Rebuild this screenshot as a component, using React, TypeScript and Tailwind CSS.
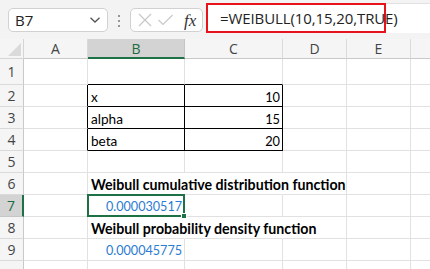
import React from "react";

const cols = [
  { name: "A", w: 64 },
  { name: "B", w: 97 },
  { name: "C", w: 98 },
  { name: "D", w: 64 },
  { name: "E", w: 64 },
  { name: "", w: 40 },
];

type CellDef = {
  text?: string;
  align?: "left" | "right";
  bold?: boolean;
  blue?: boolean;
  overflow?: boolean;
};

const rows: { h: number; label: string; cells: Record<number, CellDef> }[] = [
  { h: 26, label: "1", cells: {} },
  { h: 22, label: "2", cells: { 1: { text: "x" }, 2: { text: "10", align: "right" } } },
  { h: 22, label: "3", cells: { 1: { text: "alpha" }, 2: { text: "15", align: "right" } } },
  { h: 22, label: "4", cells: { 1: { text: "beta" }, 2: { text: "20", align: "right" } } },
  { h: 22, label: "5", cells: {} },
  { h: 22, label: "6", cells: { 1: { text: "Weibull cumulative distribution function", bold: true, overflow: true } } },
  { h: 22, label: "7", cells: { 1: { text: "0.000030517", align: "right", blue: true } } },
  { h: 22, label: "8", cells: { 1: { text: "Weibull probability density function", bold: true, overflow: true } } },
  { h: 22, label: "9", cells: { 1: { text: "0.000045775", align: "right", blue: true } } },
  { h: 22, label: "", cells: {} },
];

const uiFont = { fontFamily: "'Open Sans', 'Noto Sans', sans-serif" };
const cellFont = { fontFamily: "Lato, 'Liberation Sans', sans-serif" };

function cellBorder(r: number, c: number) {
  let right = "border-r-[#e1e1e1]";
  let bottom = "border-b-[#e1e1e1]";
  const inTable = r >= 2 && r <= 4 && (c === 1 || c === 2);
  if (inTable) {
    right = "border-r-black";
    bottom = "border-b-black";
  }
  if (r >= 2 && r <= 4 && c === 0) right = "border-r-black";
  if (r === 1 && (c === 1 || c === 2)) bottom = "border-b-black";
  return `${right} ${bottom}`;
}

function textClass(cell: CellDef) {
  if (cell.bold) return "font-bold text-black text-[14.2px]";
  if (cell.blue) return "text-[#2a7bd1] text-[12.6px]";
  if (cell.align === "right") return "text-black text-[12.8px]";
  return "text-black text-[13.6px]";
}

export default function App() {
  return (
    <div className="w-[430px] h-[269px] overflow-hidden bg-white relative">
      {/* Toolbar */}
      <div className="h-[39px] bg-[#f3f3f3] flex items-start">
        <div className="shrink-0 ml-[8px] mt-[8px] w-[100px] h-[24px] bg-white border border-[#d1d1d1] rounded-[5px] flex items-center justify-between pl-[6px] pr-[6px]">
          <span className="text-[15px] text-[#222]" style={uiFont}>B7</span>
          <svg width="12" height="8" viewBox="0 0 12 8">
            <path d="M1.5 1.8 L6 6 L10.5 1.8" fill="none" stroke="#555" strokeWidth="1.3" />
          </svg>
        </div>
        <div className="shrink-0 w-[22px] h-[39px] flex flex-col items-center pt-[15px] gap-[3px]">
          <div className="w-[2px] h-[2px] bg-[#777] rounded-full" />
          <div className="w-[2px] h-[2px] bg-[#777] rounded-full" />
          <div className="w-[2px] h-[2px] bg-[#777] rounded-full" />
        </div>
        <div className="shrink-0 mt-[8px] w-[73px] h-[24px] bg-white border border-[#d1d1d1] rounded-[5px] flex items-center pl-[6px]">
          <svg width="16" height="16" viewBox="0 0 16 16">
            <path d="M2 2 L14 14 M14 2 L2 14" stroke="#c8c8c8" strokeWidth="1.2" fill="none" />
          </svg>
          <svg width="17" height="16" viewBox="0 0 17 16" className="ml-[4px]">
            <path d="M1.5 8 L6 12.5 L15.5 3" stroke="#c8c8c8" strokeWidth="1.2" fill="none" />
          </svg>
          <span className="ml-[10px] text-[17px] italic text-[#333] leading-none" style={{ fontFamily: "'Liberation Serif', serif" }}>
            fx
          </span>
        </div>
        <div className="ml-[3px] mt-[3px] flex-1 h-[30px] bg-white border-t border-t-[#e1e1e1]">
          <div className="w-[180px] h-[30px] -mt-[1px] border-2 border-[#e8121a] flex items-center pl-[12px]">
            <span className="text-[15px] text-[#222] tracking-[-0.1px]" style={uiFont}>
              =WEIBULL(10,15,20,TRUE)
            </span>
          </div>
        </div>
      </div>

      {/* Column header row */}
      <div className="flex h-[20px]">
        <div className="shrink-0 w-[24px] h-[20px] bg-[#f5f5f5] border-r border-b border-[#d5d5d5] flex items-end justify-end pr-[2px] pb-[2px]">
          <svg width="13" height="13" viewBox="0 0 13 13">
            <path d="M13 0 L13 13 L0 13 Z" fill="#dadada" />
          </svg>
        </div>
        {cols.map((c, i) => (
          <div
            key={i}
            className={`shrink-0 h-[20px] flex items-center justify-center text-[14px] border-r ${
              c.name === "B"
                ? "bg-[#d3d3d3] border-r-[#c6c6c6] border-b-2 border-b-[#1e7145] text-[#1e6b40]"
                : "bg-[#f5f5f5] border-r-[#dadada] border-b border-b-[#c9c9c9] text-[#444]"
            }`}
            style={{ width: c.w, ...uiFont }}
          >
            {c.name}
          </div>
        ))}
      </div>

      {/* Rows */}
      {rows.map((row, ri) => {
        const r = ri + 1;
        const sel = r === 7;
        return (
          <div key={ri} className="flex" style={{ height: row.h }}>
            <div
              className={`shrink-0 w-[24px] flex items-center justify-center text-[14px] border-b ${
                sel
                  ? "bg-[#d3d3d3] border-r-2 border-r-[#1e7145] border-b-[#c6c6c6] text-[#1e6b40]"
                  : "bg-[#f5f5f5] border-r border-r-[#c9c9c9] border-b-[#dadada] text-[#444]"
              }`}
              style={{ height: row.h, ...uiFont }}
            >
              {row.label}
            </div>
            {cols.map((c, ci) => {
              const cell = row.cells[ci];
              const isSel = r === 7 && ci === 1;
              return (
                <div
                  key={ci}
                  className={`shrink-0 relative border-r border-b ${cellBorder(r, ci)} ${
                    cell?.overflow || isSel ? "overflow-visible z-10" : "overflow-hidden"
                  } ${cell?.align === "right" ? "flex items-end justify-end pr-[2px]" : "flex items-end pl-[3px]"}`}
                  style={{
                    width: c.w,
                    height: row.h,
                    borderRightColor: cell?.overflow || (ci === 2 && (r === 6 || r === 8)) ? "transparent" : undefined,
                  }}
                >
                  {cell?.text && (
                    <span className={`whitespace-nowrap leading-[18px] ${textClass(cell)}`} style={cellFont}>
                      {cell.text}
                    </span>
                  )}
                  {isSel && (
                    <div className="absolute -left-[1px] -top-[1px] w-[98px] h-[23px] border-2 border-[#1e7145] pointer-events-none">
                      <div className="absolute -right-[4px] -bottom-[4px] w-[6px] h-[6px] bg-[#1e7145] border border-white" />
                    </div>
                  )}
                </div>
              );
            })}
          </div>
        );
      })}
    </div>
  );
}
